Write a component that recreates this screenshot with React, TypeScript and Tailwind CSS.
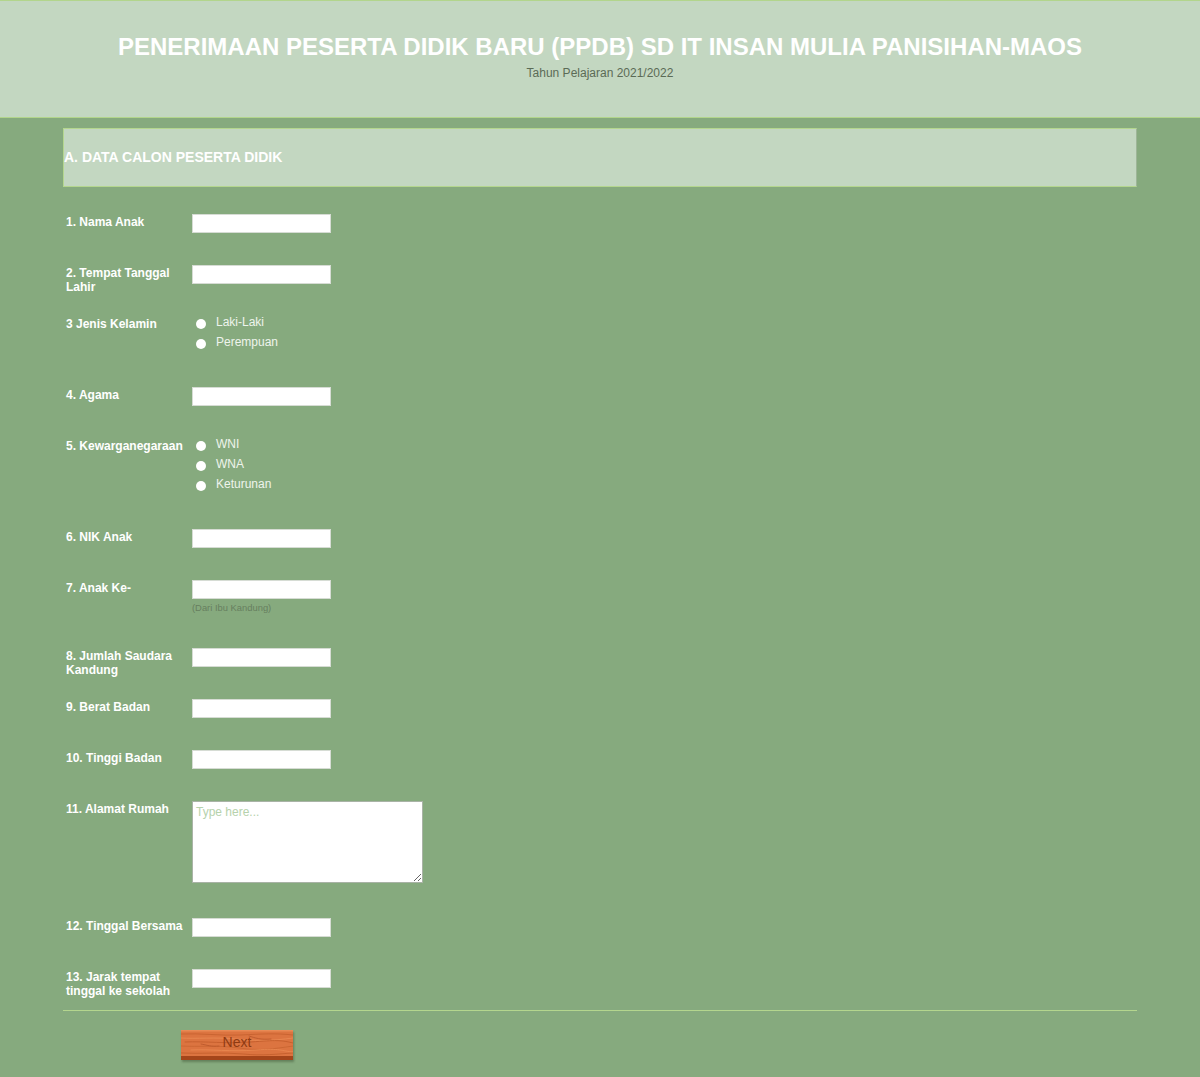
import { useState } from "react";

type Field =
  | { kind: "text"; label: string; hint?: string }
  | { kind: "radio"; label: string; name: string; options: string[] }
  | { kind: "textarea"; label: string };

const fields: Field[] = [
  { kind: "text", label: "1. Nama Anak" },
  { kind: "text", label: "2. Tempat Tanggal Lahir" },
  { kind: "radio", label: "3 Jenis Kelamin", name: "kelamin", options: ["Laki-Laki", "Perempuan"] },
  { kind: "text", label: "4. Agama" },
  { kind: "radio", label: "5. Kewarganegaraan", name: "warga", options: ["WNI", "WNA", "Keturunan"] },
  { kind: "text", label: "6. NIK Anak" },
  { kind: "text", label: "7. Anak Ke-", hint: "(Dari Ibu Kandung)" },
  { kind: "text", label: "8. Jumlah Saudara Kandung" },
  { kind: "text", label: "9. Berat Badan" },
  { kind: "text", label: "10. Tinggi Badan" },
  { kind: "textarea", label: "11. Alamat Rumah" },
  { kind: "text", label: "12. Tinggal Bersama" },
  { kind: "text", label: "13. Jarak tempat tinggal ke sekolah" },
];

const RadioGroup = ({ name, options }: { name: string; options: string[] }) => {
  const [value, setValue] = useState("");
  return (
    <div className="flex flex-col pb-[11px]">
      {options.map((opt) => (
        <label key={opt} className="flex h-[20px] items-start cursor-pointer" onClick={() => setValue(opt)}>
          <span className="ml-[4px] mt-[3px] flex h-[10px] w-[10px] items-center justify-center rounded-full bg-white">
            {value === opt && <span className="h-[4px] w-[4px] rounded-full bg-[#5c7a55]" />}
          </span>
          <span className="ml-[10px] -mt-[1px] text-[12px] leading-[14px] text-[#eef4ec]">{opt}</span>
          <input type="radio" name={name} className="hidden" readOnly checked={value === opt} />
        </label>
      ))}
    </div>
  );
};

const WoodButton = () => (
  <button className="relative flex h-[30px] w-[112px] items-start justify-center overflow-hidden shadow-[1px_2px_2px_rgba(60,80,50,0.45)]">
    <svg className="absolute inset-0" width="112" height="30" viewBox="0 0 112 30">
      <rect x="0" y="0" width="112" height="26" fill="#dc7440" />
      <rect x="0" y="26" width="112" height="4" fill="#a4451a" />
      <rect x="0" y="0" width="112" height="1.5" fill="#e88a55" />
      <g fill="none" strokeWidth="0.8" strokeLinecap="round">
        <path d="M0 4 C20 3 40 6 60 5 S95 3 112 5" stroke="#c45f2d" />
        <path d="M0 8 C15 9 35 7 55 9 S90 11 112 8" stroke="#eb8c54" />
        <path d="M4 12 C25 11 45 14 70 12 S100 10 112 13" stroke="#c05a29" />
        <path d="M0 16 C18 17 38 15 58 18 S92 19 112 16" stroke="#c86330" />
        <path d="M10 20 C30 19 50 22 75 20 S100 21 112 22" stroke="#ea8a52" />
        <path d="M0 23 C20 24 42 22 62 24 S95 24 112 23" stroke="#c25d2b" />
        <path d="M68 6 C74 8 80 10 90 9" stroke="#b8552a" />
        <path d="M20 14 C26 15 30 17 38 16" stroke="#b8552a" />
      </g>
    </svg>
    <span className="relative block text-[14px] leading-[24px] text-[#8e3a12]">Next</span>
  </button>
);

export default function App() {
  return (
    <div className="min-h-screen bg-[#86aa7e] pb-[16px] font-['Liberation_Sans',Arial,sans-serif]">
      <header className="h-[118px] border-y border-[#b2d58c] bg-[#c3d7c1] pt-[32px] text-center">
        <h1 className="text-[24px] font-bold leading-[28px] text-white">
          PENERIMAAN PESERTA DIDIK BARU (PPDB) SD IT INSAN MULIA PANISIHAN-MAOS
        </h1>
        <div className="mt-[5px] text-[12px] leading-[14px] text-[#5b6b56]">Tahun Pelajaran 2021/2022</div>
      </header>

      <main className="ml-[63px] mt-[10px] w-[1074px]">
        <div className="flex h-[59px] items-center border border-[#b4d68e] border-r-[#9db597] bg-[#c3d7c1]">
          <h2 className="text-[14px] font-bold text-white">A. DATA CALON PESERTA DIDIK</h2>
        </div>

        <ul className="mt-[17px]">
          {fields.map((f) => (
            <li key={f.label} className="flex py-[10px] pl-[3px]">
              <label className="w-[126px] pr-[6px] pt-[1px] text-[12px] font-bold leading-[14px] text-white">
                {f.label}
              </label>
              <div className="min-h-[31px]">
                {f.kind === "text" && (
                  <div>
                    <input
                      type="text"
                      className="block h-[19px] w-[139px] border border-[#d6dcd4] bg-white px-[3px] text-[12px] outline-none"
                    />
                    {f.hint && (
                      <div className="mb-[14px] mt-[2px] text-[9.4px] leading-[13px] text-[#667f5e]">{f.hint}</div>
                    )}
                  </div>
                )}
                {f.kind === "radio" && <RadioGroup name={f.name} options={f.options} />}
                {f.kind === "textarea" && (
                  <textarea
                    placeholder="Type here..."
                    className="mb-[15px] block h-[82px] w-[231px] border border-[#a9b3a6] bg-white px-[3px] py-[1px] text-[12px] outline-none placeholder:text-[#b6d2ac]"
                  />
                )}
              </div>
            </li>
          ))}
        </ul>

        <div className="border-t border-[#b4d68e] pl-[118px] pt-[19px]">
          <WoodButton />
        </div>
      </main>
    </div>
  );
}
